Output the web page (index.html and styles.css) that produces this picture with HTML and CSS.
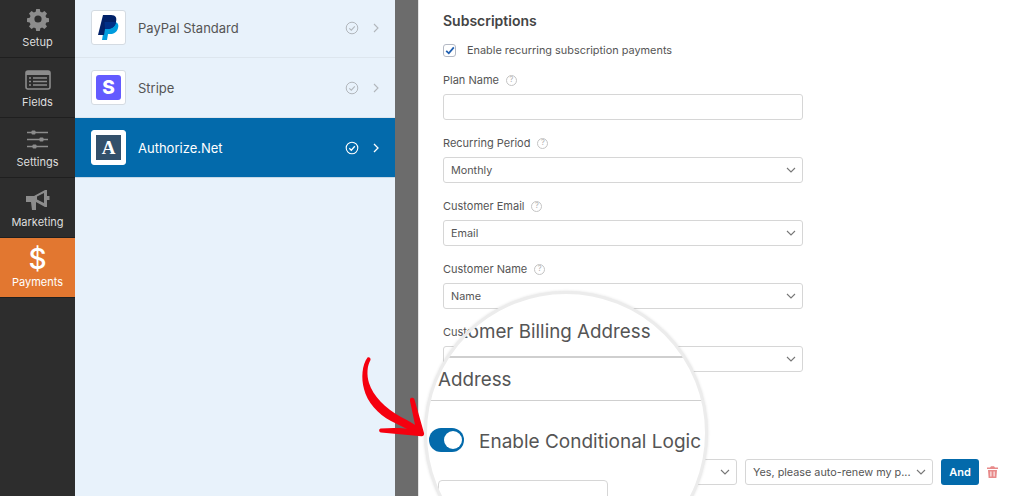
FILE: index.html
```html
<!DOCTYPE html>
<html lang="en">
<head>
<meta charset="utf-8">
<title>Payments</title>
<link rel="stylesheet" href="styles.css">
</head>
<body>
<div class="app">
  <nav class="sidebar">
    <a class="tab tab-first">
      <svg class="tab-icon" width="24" height="24" viewBox="0 0 24 24"><path fill="#8c8c8c" fill-rule="evenodd" d="M10 1h4l.6 3 2 .9 2.600-1.700 2.800 2.800-1.700 2.600.9 2 3 .6v4l-3 .6-.9 2 1.700 2.600-2.800 2.800-2.600-1.700-2 .9-.6 3h-4l-.6-3-2-.9-2.600 1.700-2.800-2.800 1.700-2.600-.9-2-3-.6v-4l3-.6.9-2-1.700-2.600 2.800-2.800 2.600 1.700 2-.9zM12 8a4 4 0 1 0 0 8 4 4 0 0 0 0-8z" transform="translate(1.200 1.200) scale(.9)"/></svg>
      <span>Setup</span>
    </a>
    <a class="tab">
      <svg class="tab-icon" width="26" height="22" viewBox="0 0 26 22"><rect x="1" y="2" width="24" height="18" rx="2" fill="none" stroke="#8c8c8c" stroke-width="1.600"/><rect x="1" y="2" width="24" height="4" fill="#8c8c8c"/><path stroke="#8c8c8c" stroke-width="1.600" d="M4 9h2M8 9h14M4 12.500h2M8 12.500h14M4 16h2M8 16h14"/></svg>
      <span>Fields</span>
    </a>
    <a class="tab">
      <svg class="tab-icon" width="21" height="22" viewBox="0 0 21 22"><path stroke="#8c8c8c" stroke-width="1.300" d="M0 3.500h21M0 10.500h21M0 17.500h21"/><rect x="4.500" y="1.500" width="4" height="4" rx="1" fill="#8c8c8c"/><rect x="12.500" y="8.500" width="4" height="4" rx="1" fill="#8c8c8c"/><rect x="5.500" y="15.500" width="4" height="4" rx="1" fill="#8c8c8c"/></svg>
      <span>Settings</span>
    </a>
    <a class="tab">
      <svg class="tab-icon" width="26" height="22" viewBox="0 0 26 22"><path fill="#8c8c8c" d="M1 7h8l11-6h2v17h-2l-9-5v8H7l-1-8H1z"/><path fill="#2d2d2d" d="M12 7.500l7-3.500v10l-7-3.500z"/><rect x="22" y="7" width="2.500" height="4" fill="#8c8c8c"/></svg>
      <span>Marketing</span>
    </a>
    <a class="tab tab-active">
      <span class="dollar">$</span>
      <span>Payments</span>
    </a>
  </nav>

  <section class="providers">
    <div class="provider">
      <span class="logo">
        <svg width="22" height="26" viewBox="0 0 22 26"><path fill="#009cde" d="M7 7h9c4 0 5 3 4 6-1 4-4 6-8 6h-2l-1 6H4z"/><path fill="#012169" d="M5 0h8c5 0 6 3 5 7-1 5-5 7-9 7H7l-1 6H0z"/><path fill="#003087" d="M6.500 7h9c1.500 0 2.500.4 2.500.4C17 12 13 14 9 14H7z"/></svg>
      </span>
      <span class="provider-name">PayPal Standard</span>
      <svg class="check" width="14" height="14" viewBox="0 0 14 14"><circle cx="7" cy="7" r="5.800" fill="none" stroke="currentColor" stroke-width="1"/><path d="M4.300 7.300l2 1.900 3.500-3.900" fill="none" stroke="currentColor" stroke-width="1.100"/></svg>
      <svg class="chev" width="6" height="10" viewBox="0 0 6 10"><path d="M1 1l4 4-4 4" fill="none" stroke="currentColor" stroke-width="1.100"/></svg>
    </div>
    <div class="provider">
      <span class="logo"><span class="stripe">S</span></span>
      <span class="provider-name">Stripe</span>
      <svg class="check" width="14" height="14" viewBox="0 0 14 14"><circle cx="7" cy="7" r="5.800" fill="none" stroke="currentColor" stroke-width="1"/><path d="M4.300 7.300l2 1.900 3.500-3.900" fill="none" stroke="currentColor" stroke-width="1.100"/></svg>
      <svg class="chev" width="6" height="10" viewBox="0 0 6 10"><path d="M1 1l4 4-4 4" fill="none" stroke="currentColor" stroke-width="1.100"/></svg>
    </div>
    <div class="provider provider-active">
      <span class="logo"><span class="authnet">A</span></span>
      <span class="provider-name">Authorize.Net</span>
      <svg class="check" width="14" height="14" viewBox="0 0 14 14"><circle cx="7" cy="7" r="5.800" fill="none" stroke="currentColor" stroke-width="1.100"/><path d="M4.300 7.300l2 1.900 3.500-3.900" fill="none" stroke="currentColor" stroke-width="1.300"/></svg>
      <svg class="chev" width="6" height="10" viewBox="0 0 6 10"><path d="M1 1l4 4-4 4" fill="none" stroke="currentColor" stroke-width="1.300"/></svg>
    </div>
  </section>

  <div class="gutter"></div>

  <main class="panel">
    <h2 class="heading">Subscriptions</h2>
    <label class="checkline">
      <span class="checkbox"><svg width="10" height="9" viewBox="0 0 10 9"><path d="M1.200 4.800l2.600 2.500 5-6" fill="none" stroke="#1f5fb0" stroke-width="1.800"/></svg></span>
      Enable recurring subscription payments
    </label>

    <div class="field">
      <div class="label">Plan Name <span class="help">?</span></div>
      <div class="control"></div>
    </div>
    <div class="field">
      <div class="label">Recurring Period <span class="help">?</span></div>
      <div class="control">Monthly<svg class="caret" width="10" height="6" viewBox="0 0 10 6"><path d="M1 1l4 4 4-4" fill="none" stroke="currentColor" stroke-width="1.100"/></svg></div>
    </div>
    <div class="field">
      <div class="label">Customer Email <span class="help">?</span></div>
      <div class="control">Email<svg class="caret" width="10" height="6" viewBox="0 0 10 6"><path d="M1 1l4 4 4-4" fill="none" stroke="currentColor" stroke-width="1.100"/></svg></div>
    </div>
    <div class="field">
      <div class="label">Customer Name <span class="help">?</span></div>
      <div class="control">Name<svg class="caret" width="10" height="6" viewBox="0 0 10 6"><path d="M1 1l4 4 4-4" fill="none" stroke="currentColor" stroke-width="1.100"/></svg></div>
    </div>
    <div class="field">
      <div class="label">Customer Billing Address</div>
      <div class="control"><svg class="caret" width="10" height="6" viewBox="0 0 10 6"><path d="M1 1l4 4 4-4" fill="none" stroke="currentColor" stroke-width="1.100"/></svg></div>
    </div>

    <div class="rule-row">
      <div class="control control-first"><svg class="caret" width="10" height="6" viewBox="0 0 10 6"><path d="M1 1l4 4 4-4" fill="none" stroke="currentColor" stroke-width="1.100"/></svg></div>
      <div class="control control-answer"><span class="answer">Yes, please auto-renew my p...</span><svg class="caret" width="10" height="6" viewBox="0 0 10 6"><path d="M1 1l4 4 4-4" fill="none" stroke="currentColor" stroke-width="1.100"/></svg></div>
      <button class="and">And</button>
      <svg class="trash" width="11" height="12" viewBox="0 0 11 12"><path fill="#e88a8a" fill-rule="evenodd" d="M0 1.500h3L4 .3h3l1 1.200h3V3H0zM1 4h9l-.6 8H1.600zM3.400 5.500v5h1v-5zM6.600 5.500v5h1v-5z"/></svg>
    </div>
  </main>
</div>

<div class="lens">
  <div class="lens-title">Customer Billing Address</div>
  <div class="lens-rule lens-rule-first"></div>
  <div class="lens-address">Address</div>
  <div class="lens-rule lens-rule-second"></div>
  <div class="lens-toggle-row">
    <span class="toggle"><span class="knob"></span></span>
    <span class="lens-toggle-text">Enable Conditional Logic</span>
  </div>
  <div class="lens-input"></div>
</div>

<svg class="arrow" width="80" height="95" viewBox="355 350 80 95">
  <path fill="#f5000f" d="M367.500 357.500C369 356.500 371 358 370.500 360C367 366 366.500 375 369 383C373 396 385 408 401 417C409 421 416 425 423 430L421 436C411 431 401 426 391 421C378 414 367 402 364 389C361 378 362 365 367.500 357.500Z"/>
  <path fill="#f5000f" d="M410 399C411 397 414 397.500 414.500 399.500L424 433C424.500 435 423.400 436.500 421.300 436.300L381 432.500C378.700 432.200 378.500 429 380.800 428.600C393 427.500 405 428 416 430C414 420 412 410 410 401Z"/>
</svg>
</body>
</html>
```
FILE: styles.css
```css
* { box-sizing: border-box; }
html, body { margin: 0; padding: 0; }
body {
  width: 1024px;
  height: 496px;
  overflow: hidden;
  position: relative;
  background: #fff;
  font-family: Inter, "Liberation Sans", sans-serif;
  color: #555;
  -webkit-font-smoothing: antialiased;
}
.app { display: flex; height: 496px; overflow: hidden; }

.sidebar { width: 75px; flex: none; background: #2d2d2d; }
.tab {
  display: flex;
  flex-direction: column;
  align-items: center;
  justify-content: flex-end;
  height: 60px;
  padding-bottom: 8px;
  border-bottom: 1px solid #1f1f1f;
  color: #dedede;
  font-size: 11px;
  line-height: 14px;
}
.tab-first { height: 58px; }
.tab-icon { display: block; margin-bottom: 4px; }
.tab-active { background: #e27730; color: #fff; }
.dollar { font-size: 28px; line-height: 30px; font-weight: 500; margin-bottom: 1px; color: #fff; }

.providers { width: 320px; flex: none; background: #e8f2fb; }
.provider {
  display: flex;
  align-items: center;
  height: 60px;
  padding: 0 16px 0 16px;
  border-bottom: 1px solid #dde6ee;
  font-size: 13px;
  color: #555;
}
.provider:first-child { height: 58px; padding-bottom: 2px; }
.logo {
  flex: none;
  width: 35px;
  height: 35px;
  display: flex;
  align-items: center;
  justify-content: center;
  background: #fff;
  border: 1px solid #d4dbe2;
  border-radius: 3px;
  margin-right: 12px;
}
.provider-name { flex: 1; }
.check { color: #b2b7bc; margin-right: 14px; }
.chev { color: #b2b7bc; }
.provider-active { background: #036aab; color: #fff; border-bottom-color: #c6d8e6; }
.provider-active .logo { border-color: #fff; }
.provider-active .check, .provider-active .chev { color: #fff; }
.stripe {
  display: flex;
  align-items: center;
  justify-content: center;
  width: 25px;
  height: 25px;
  background: #635bff;
  border-radius: 3px;
  color: #fff;
  font-size: 19px;
  font-weight: 800;
}
.authnet {
  display: flex;
  align-items: center;
  justify-content: center;
  width: 25px;
  height: 25px;
  background: #33506b;
  color: #fff;
  font-family: "Liberation Serif", serif;
  font-size: 19px;
  font-weight: 700;
}

.gutter { width: 23px; flex: none; background: #6c6c6c; }

.panel {
  flex: 1;
  min-width: 0;
  padding: 12px 0 0 24px;
  border-left: 1px solid #e3e3e3;
}
.heading { margin: 0 0 14px; font-size: 14px; line-height: 17px; font-weight: 600; color: #444; }
.checkline { display: flex; align-items: center; height: 14px; font-size: 10.900px; color: #555; margin-bottom: 16px; }
.checkbox {
  display: flex;
  align-items: center;
  justify-content: center;
  flex: none;
  width: 13px;
  height: 13px;
  margin: 0 11px 0 0;
  border: 1px solid #b4b9c4;
  border-radius: 3px;
}
.field { width: 360px; margin-bottom: 16px; }
.label { display: flex; align-items: center; gap: 7px; height: 14px; font-size: 11px; line-height: 14px; color: #555; margin-bottom: 7px; }
.help {
  display: inline-flex;
  align-items: center;
  justify-content: center;
  width: 11px;
  height: 11px;
  border: 1px solid #c4c4c4;
  border-radius: 50%;
  color: #b0b0b0;
  font-size: 7.500px;
  line-height: 1;
}
.control {
  position: relative;
  display: flex;
  align-items: center;
  height: 26px;
  padding: 0 7px;
  background: #fff;
  border: 1px solid #d6d6d6;
  border-radius: 3px;
  font-size: 10.800px;
  color: #555;
}
.caret { position: absolute; right: 6px; top: 9px; color: #777; }
.rule-row { display: flex; align-items: center; margin-top: 87px; }
.control-first { width: 294px; margin-right: 8px; }
.control-answer { width: 188px; margin-right: 8px; }
.answer { white-space: nowrap; }
.and {
  width: 38px;
  height: 26px;
  margin: 0 8px 0 0;
  padding: 0;
  border: 0;
  border-radius: 3px;
  background: #036aab;
  color: #fff;
  font-family: Inter, "Liberation Sans", sans-serif;
  font-size: 11px;
  font-weight: 600;
}

.lens {
  position: absolute;
  left: 424px;
  top: 291px;
  width: 284px;
  height: 284px;
  border-radius: 50%;
  border: 3px solid #ececec;
  background: #fff;
  overflow: hidden;
  box-shadow: 0 0 3px rgba(0, 0, 0, .12);
}
.lens-title { margin: 26px 0 0 0; font-size: 18.800px; line-height: 24px; color: #555; white-space: nowrap; }
.lens-rule { height: 1.500px; background: #cfcfcf; }
.lens-rule-first { margin-top: 12px; }
.lens-address { margin: 10px 0 0 11px; font-size: 18.800px; line-height: 24px; color: #555; }
.lens-rule-second { margin-top: 8px; }
.lens-toggle-row { display: flex; align-items: center; margin: 27px 0 0 2px; }
.toggle {
  display: flex;
  align-items: center;
  justify-content: flex-end;
  width: 35px;
  height: 24px;
  padding-right: 2px;
  border-radius: 12px;
  background: #036aab;
}
.knob { width: 18px; height: 18px; border-radius: 50%; background: #fff; }
.lens-toggle-text { margin-left: 15px; font-size: 19px; line-height: 24px; color: #555; white-space: nowrap; position: relative; top: 2px; }
.lens-input { width: 170px; height: 40px; margin: 28px 0 0 11px; border: 1.500px solid #d6d6d6; border-radius: 4px; }

.arrow { position: absolute; left: 355px; top: 350px; }
```
